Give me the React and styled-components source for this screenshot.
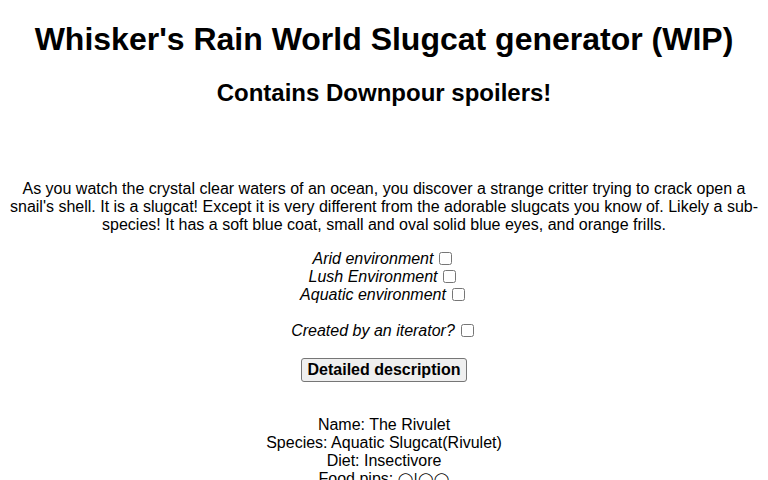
import React from "react";
import styled, { createGlobalStyle } from "styled-components";

const Global = createGlobalStyle`
  html, body { background: #fff; }
  body {
    margin: 0 8px 8px;
    font-family: "Liberation Sans", Arial, sans-serif;
    font-size: 16px;
    color: #000;
    text-align: center;
  }
`;

const Title = styled.h1`
  font-size: 32px;
  font-weight: bold;
  margin: 21px 0 21.44px;
`;

const Subtitle = styled.h2`
  font-size: 24px;
  font-weight: bold;
  margin: 19.92px 0;
`;

const Intro = styled.p`
  margin: 73px 0 16px;
  line-height: 18px;
`;

const Options = styled.div`
  margin: 16px 0;
  line-height: 18px;
`;

const Option = styled.label`
  display: block;
  font-style: italic;
  height: 18px;
  margin-bottom: ${(p) => (p.$gap ? "18px" : "0")};
`;

const Box = styled.input.attrs({ type: "checkbox" })`
  width: 13px;
  height: 13px;
  margin: 0 3px 0 6px;
  vertical-align: -1px;
`;

const ButtonRow = styled.div`
  margin: 18px 0 34px;
`;

const DetailButton = styled.button`
  font-family: "Liberation Sans", Arial, sans-serif;
  font-size: 16px;
  font-weight: bold;
  color: #000;
  background: #efefef;
  border: 1px solid #767676;
  border-radius: 3px;
  padding: 2px 6px;
  line-height: 18px;
`;

const Details = styled.div`
  line-height: 18px;
`;

const Pips = styled.span`
  font-family: "DejaVu Sans", sans-serif;
  font-size: 14px;
`;

export default function App() {
  return (
    <>
      <Global />
      <Title>Whisker's Rain World Slugcat generator (WIP)</Title>
      <Subtitle>Contains Downpour spoilers!</Subtitle>
      <Intro>
        As you watch the crystal clear waters of an ocean, you discover a strange critter
        trying to crack open a snail's shell. It is a slugcat! Except it is very different
        from the adorable slugcats you know of. Likely a sub-species! It has a soft blue
        coat, small and oval solid blue eyes, and orange frills.
      </Intro>
      <Options>
        <Option>Arid environment<Box /></Option>
        <Option>Lush Environment<Box /></Option>
        <Option $gap>Aquatic environment<Box /></Option>
        <Option>Created by an iterator?<Box /></Option>
      </Options>
      <ButtonRow>
        <DetailButton>Detailed description</DetailButton>
      </ButtonRow>
      <Details>
        <div>Name: The Rivulet</div>
        <div>Species: Aquatic Slugcat(Rivulet)</div>
        <div>Diet: Insectivore</div>
        <div>Food pips: <Pips>◯|◯◯</Pips></div>
      </Details>
    </>
  );
}
